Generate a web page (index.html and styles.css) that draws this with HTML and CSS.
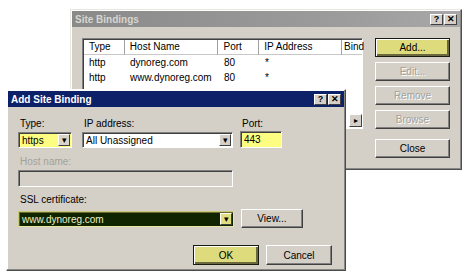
FILE: index.html
```html
<!DOCTYPE html>
<html lang="en">
<head>
  <meta charset="UTF-8">
  <title>Site Bindings</title>
  <link rel="stylesheet" href="styles.css">
</head>
<body>
  <div class="desk">

    <section class="win sites">
      <header class="cap inactive">
        <span class="cap-title">Site Bindings</span>
        <div class="cap-btns"><span class="cbtn">?</span><span class="cbtn">&#10005;</span></div>
      </header>
      <div class="sites-body">
        <div class="list">
          <div class="lv-head">
            <span class="col c-type">Type</span>
            <span class="col c-host">Host Name</span>
            <span class="col c-port">Port</span>
            <span class="col c-ip">IP Address</span>
            <span class="col c-bind">Bind</span>
          </div>
          <div class="lv-row">
            <span class="col c-type">http</span>
            <span class="col c-host">dynoreg.com</span>
            <span class="col c-port">80</span>
            <span class="col c-ip">*</span>
          </div>
          <div class="lv-row">
            <span class="col c-type">http</span>
            <span class="col c-host">www.dynoreg.com</span>
            <span class="col c-port">80</span>
            <span class="col c-ip">*</span>
          </div>
          <div class="hscroll"><span class="sarrow">&#9656;</span></div>
        </div>
        <div class="side">
          <button class="btn def hl">Add...</button>
          <button class="btn off">Edit...</button>
          <button class="btn off">Remove</button>
          <button class="btn off">Browse</button>
          <button class="btn close">Close</button>
        </div>
      </div>
    </section>

    <section class="win add">
      <header class="cap active">
        <span class="cap-title">Add Site Binding</span>
        <div class="cap-btns"><span class="cbtn">?</span><span class="cbtn">&#10005;</span></div>
      </header>
      <div class="add-body">
        <div class="field-row">
          <div class="fld f-type">
            <label>Type:</label>
            <div class="combo yellow"><span class="val">https</span><span class="drop">&#9662;</span></div>
          </div>
          <div class="fld f-ip">
            <label>IP address:</label>
            <div class="combo"><span class="val">All Unassigned</span><span class="drop">&#9662;</span></div>
          </div>
          <div class="fld f-port">
            <label>Port:</label>
            <div class="input yellow">443</div>
          </div>
        </div>

        <label class="dim">Host name:</label>
        <div class="input disabled"></div>

        <label class="ssl-label">SSL certificate:</label>
        <div class="ssl-row">
          <div class="combo dark"><span class="val">www.dynoreg.com</span><span class="drop">&#9662;</span></div>
          <button class="btn view">View...</button>
        </div>

        <div class="actions">
          <button class="btn def hl">OK</button>
          <button class="btn">Cancel</button>
        </div>
      </div>
    </section>

  </div>
</body>
</html>
```

FILE: styles.css
```css
body {
  margin: 0;
  background: #fff;
  font-family: "Liberation Sans", Arial, sans-serif;
  font-size: 10px;
  color: #000;
}
.desk {
  position: relative;
  width: 474px;
  height: 277px;
  overflow: hidden;
}

/* windows */
.win {
  position: absolute;
  box-sizing: border-box;
  background: #d4d0c8;
  border: 1px solid;
  border-color: #e8e6e0 #505050 #505050 #e8e6e0;
  box-shadow: inset -1px -1px #8a8884, inset 1px 1px #fff;
  padding: 1px;
}
.sites {
  left: 70px;
  top: 9px;
  width: 392px;
  height: 161px;
}
.add {
  left: 6px;
  top: 89px;
  width: 340px;
  height: 182px;
  border-color: #fff #4a4a4a #4a4a4a #fff;
}

.cap {
  height: 16px;
  display: flex;
  align-items: center;
  justify-content: space-between;
  padding: 0 3px 0 3px;
}
.cap.inactive {
  background: linear-gradient(to right, #8a8a8a, #9c9c9c 70%, #a8a8a8);
  color: #d6d6d0;
}
.cap.active {
  background: #0c2168;
  color: #fff;
}
.cap-title {
  font-weight: bold;
  font-size: 10px;
}
.cap-btns {
  display: flex;
  gap: 1px;
}
.cbtn {
  width: 13px;
  height: 11px;
  box-sizing: border-box;
  background: #d4d0c8;
  border: 1px solid;
  border-color: #fff #404040 #404040 #fff;
  font-size: 9px;
  font-weight: bold;
  line-height: 9px;
  text-align: center;
  color: #000;
}

/* site bindings body */
.sites-body {
  display: flex;
  gap: 12px;
  padding: 11px 10px 0 10px;
}
.list {
  position: relative;
  width: 281px;
  height: 91px;
  box-sizing: border-box;
  background: #fff;
  border: 1px solid;
  border-color: #808080 #fff #fff #808080;
  box-shadow: inset 1px 1px #404040;
  padding: 1px 0 0 1px;
}
.lv-head, .lv-row {
  display: flex;
  height: 15px;
  align-items: center;
  white-space: nowrap;
}
.lv-head .col {
  box-sizing: border-box;
  height: 15px;
  line-height: 14px;
  border-right: 1px solid #a0a0a0;
  border-bottom: 1px solid #c8c8c8;
}
.col {
  padding-left: 5px;
  box-sizing: border-box;
  overflow: hidden;
}
.c-type { width: 41px; }
.c-host { width: 94px; }
.c-port { width: 41px; }
.c-ip { width: 83px; }
.lv-head .c-bind {
  width: 20px;
  padding-left: 2px;
  border-right: 0;
  overflow: visible;
}
.hscroll {
  position: absolute;
  right: 0;
  bottom: 1px;
  width: 13px;
  height: 13px;
  box-sizing: border-box;
  background: #d4d0c8;
  border: 1px solid;
  border-color: #fff #404040 #404040 #fff;
  display: flex;
  align-items: center;
  justify-content: center;
}
.sarrow {
  font-size: 8px;
  line-height: 8px;
}

.side {
  display: flex;
  flex-direction: column;
  width: 75px;
}

/* buttons */
.btn {
  font-family: inherit;
  font-size: 10px;
  height: 19px;
  box-sizing: border-box;
  background: #d4d0c8;
  border: 1px solid;
  border-color: #fff #404040 #404040 #fff;
  box-shadow: inset -1px -1px #808080;
  padding: 0;
  color: #000;
}
.side .btn { margin-top: 5px; }
.side .btn:first-child { margin-top: 0; }
.side .close { margin-top: 10px; }
.btn.def {
  border: 1px solid #1a1a10;
  box-shadow: inset 1px 1px #fff, inset -2px -2px #6a6840;
}
.btn.hl { background: #dedb7c; }
.btn.off {
  color: #a4a098;
  text-shadow: 1px 1px #fff;
}

/* add site binding body */
.add-body {
  display: flex;
  flex-direction: column;
  padding: 11px 12px 0 10px;
}
label {
  display: block;
  height: 11px;
  line-height: 11px;
  padding-left: 2px;
}
label.dim { color: #a4a098; margin-top: 8px; }
.ssl-label { margin-top: 7px; }
.field-row {
  display: flex;
}
.fld label { margin-bottom: 3px; }
.f-type { width: 54px; }
.f-ip { width: 151px; margin-left: 10px; }
.f-port { width: 42px; margin-left: 7px; }
.f-port label { margin-bottom: 2px; }

.combo {
  height: 16px;
  box-sizing: border-box;
  display: flex;
  align-items: stretch;
  background: #fff;
  border: 1px solid;
  border-color: #808080 #fff #fff #808080;
  box-shadow: inset 1px 1px #404040;
  padding: 1px;
}
.combo .val {
  flex: 1;
  line-height: 13px;
  padding-left: 2px;
  white-space: nowrap;
}
.combo .drop {
  width: 12px;
  box-sizing: border-box;
  background: #d4d0c8;
  border: 1px solid;
  border-color: #fff #404040 #404040 #fff;
  font-size: 9px;
  line-height: 11px;
  text-align: center;
}
.yellow { background: #fdfd82; }
.combo.yellow .drop { background: #d8d4c8; }

.input {
  height: 17px;
  box-sizing: border-box;
  background: #fff;
  border: 1px solid;
  border-color: #808080 #fff #fff #808080;
  box-shadow: inset 1px 1px #404040;
  padding-left: 3px;
  line-height: 15px;
}
.input.yellow { background: #fdfd82; }
.input.disabled {
  background: #d4d0c8;
  width: 215px;
  margin-top: 3px;
}

.ssl-row {
  display: flex;
  align-items: center;
  margin-top: 4px;
}
.combo.dark {
  width: 216px;
  background: #102400;
  border-color: #c8c878 #e8e6a0 #e8e6a0 #c8c878;
  box-shadow: inset 1px 1px #6a6a30;
  color: #eef0c8;
}
.combo.dark .drop {
  background: #e2de80;
  color: #000;
}
.btn.view {
  width: 62px;
  margin-left: 7px;
}

.actions {
  display: flex;
  justify-content: flex-end;
  gap: 7px;
  margin-top: 17px;
}
.actions .btn {
  width: 66px;
  height: 20px;
}
```
